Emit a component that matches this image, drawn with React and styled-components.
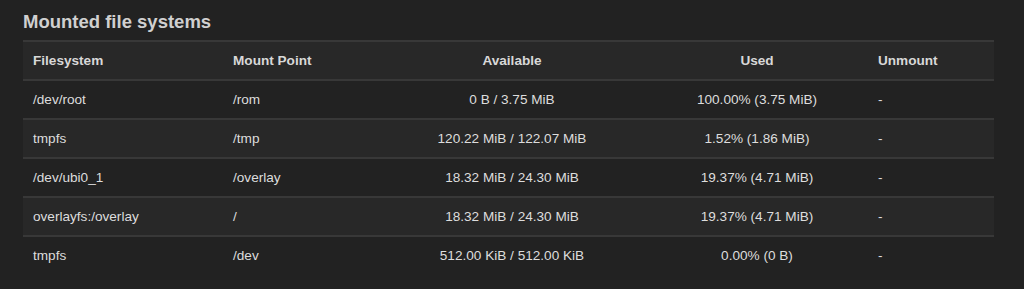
import React from "react";
import styled, { createGlobalStyle } from "styled-components";

const GlobalStyle = createGlobalStyle`
  html, body {
    margin: 0;
    background: #222222;
  }
  body {
    font-family: "Liberation Sans", Arial, sans-serif;
    color: #dddddd;
  }
`;

const Section = styled.div`
  padding: 10px 30px 0 23px;
`;

const Title = styled.h3`
  margin: 0 0 6px 0;
  font-size: 18.5px;
  line-height: 24px;
  font-weight: bold;
  color: #d0d0d0;
`;

const Table = styled.div`
  display: grid;
  grid-template-columns: 200px 155px 268px 222px 126px;
  width: 971px;
  font-size: 13.6px;
`;

const Row = styled.div`
  display: contents;
  & > div {
    background: ${(p) => (p.$shaded ? "#282828" : "transparent")};
    border-top: 2px solid #383838;
  }
`;

const Cell = styled.div`
  height: 37px;
  display: flex;
  align-items: center;
  justify-content: ${(p) => (p.$center ? "center" : "flex-start")};
  padding: 0 10px;
  font-weight: ${(p) => (p.$head ? "bold" : "normal")};
  color: ${(p) => (p.$head ? "#d8d8d8" : "#dddddd")};
`;

const rows = [
  ["/dev/root", "/rom", "0 B / 3.75 MiB", "100.00% (3.75 MiB)"],
  ["tmpfs", "/tmp", "120.22 MiB / 122.07 MiB", "1.52% (1.86 MiB)"],
  ["/dev/ubi0_1", "/overlay", "18.32 MiB / 24.30 MiB", "19.37% (4.71 MiB)"],
  ["overlayfs:/overlay", "/", "18.32 MiB / 24.30 MiB", "19.37% (4.71 MiB)"],
  ["tmpfs", "/dev", "512.00 KiB / 512.00 KiB", "0.00% (0 B)"],
];

export default function App() {
  return (
    <>
      <GlobalStyle />
      <Section>
        <Title>Mounted file systems</Title>
        <Table>
          <Row $shaded>
            <Cell $head>Filesystem</Cell>
            <Cell $head>Mount Point</Cell>
            <Cell $head $center>Available</Cell>
            <Cell $head $center>Used</Cell>
            <Cell $head>Unmount</Cell>
          </Row>
          {rows.map((r, i) => (
            <Row key={i} $shaded={i % 2 === 1}>
              <Cell>{r[0]}</Cell>
              <Cell>{r[1]}</Cell>
              <Cell $center>{r[2]}</Cell>
              <Cell $center>{r[3]}</Cell>
              <Cell>-</Cell>
            </Row>
          ))}
        </Table>
      </Section>
    </>
  );
}
